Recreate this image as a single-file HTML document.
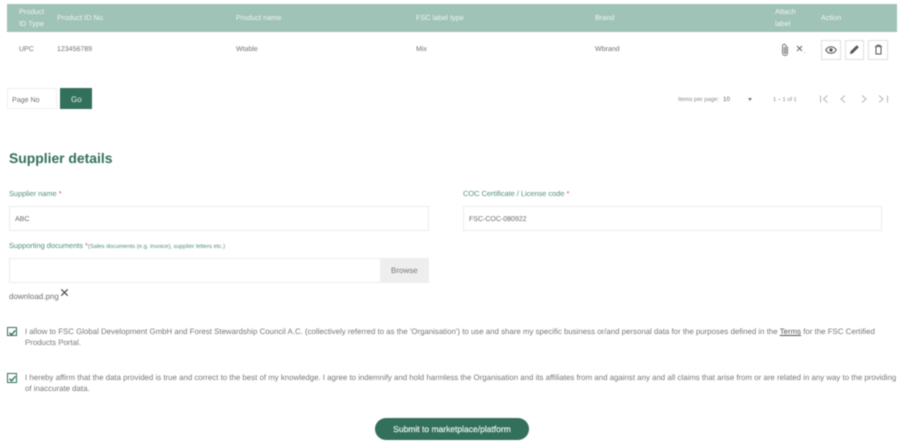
<!DOCTYPE html>
<html><head><meta charset="utf-8">
<style>
html,body{margin:0;padding:0;background:#fff;}
#p{position:relative;width:903px;height:442px;overflow:hidden;background:#fff;font-family:"Liberation Sans",sans-serif;filter:blur(.45px);text-rendering:geometricPrecision;}
#p div,#p span.a,#p svg{position:absolute;}
.t{white-space:nowrap;line-height:10px;}
.h{color:#eef5f2;font-size:7.3px;}
.c{color:#707070;font-size:7px;}
.l{color:#4f8f79;font-size:7.4px;}
.box{border:1px solid #ececec;box-sizing:border-box;background:#fff;}
.body{color:#777;font-size:7.86px;}
.s{color:#888;font-size:5.9px;}
</style></head><body>
<div id="p">
<div style="left:7px;top:4px;width:890px;height:28px;background:#9fc3b7"></div>
<div class="t h" style="left:19px;top:7px">Product</div>
<div class="t h" style="left:19px;top:19px">ID Type</div>
<div class="t h" style="left:57px;top:13px">Product ID No.</div>
<div class="t h" style="left:236px;top:13px">Product name</div>
<div class="t h" style="left:416px;top:13px">FSC label type</div>
<div class="t h" style="left:595px;top:13px">Brand</div>
<div class="t h" style="left:775px;top:7px">Attach</div>
<div class="t h" style="left:775px;top:19px">label</div>
<div class="t h" style="left:821px;top:13px">Action</div>

<div class="t c" style="left:19px;top:44.500px">UPC</div>
<div class="t c" style="left:57px;top:44.500px">123456789</div>
<div class="t c" style="left:236px;top:44.500px">Wtable</div>
<div class="t c" style="left:416px;top:44.500px">Mix</div>
<div class="t c" style="left:595px;top:44.500px">Wbrand</div>

<svg style="left:780px;top:43px" width="10" height="14" viewBox="0 0 10 14"><path d="M7.500 3.500V10a2.500 2.500 0 0 1-5 0V3a1.700 1.700 0 0 1 3.400 0v6.500a.8.8 0 0 1-1.600 0V4" fill="none" stroke="#777" stroke-width="1"/></svg>
<svg style="left:796px;top:45px" width="7" height="7" viewBox="0 0 7 7"><path d="M1 1l5 5M6 1L1 6" stroke="#666" stroke-width="1"/></svg>
<div style="left:804px;top:52px;width:1px;height:1px;background:#bbb"></div>

<div class="box" style="left:821px;top:40px;width:20px;height:20px;border-color:#e0e0e0"></div>
<div class="box" style="left:845px;top:40px;width:19px;height:20px;border-color:#e0e0e0"></div>
<div class="box" style="left:868px;top:40px;width:20px;height:20px;border-color:#e0e0e0"></div>
<svg style="left:825px;top:45px" width="12" height="10" viewBox="0 0 12 10"><path d="M.8 5C2 2.800 3.800 1.700 6 1.700S10 2.800 11.200 5C10 7.200 8.200 8.300 6 8.300S2 7.200 .8 5z" fill="none" stroke="#555" stroke-width="1"/><circle cx="6" cy="5" r="1.700" fill="#555"/></svg>
<svg style="left:849px;top:44px" width="11" height="11" viewBox="0 0 11 11"><path d="M1 10l.5-2.600L7.800 1.200 9.800 3.200 3.500 9.500z" fill="#555"/></svg>
<svg style="left:874px;top:44px" width="9" height="11" viewBox="0 0 9 11"><path d="M1 2.500h7M3 2.500V1.300h3v1.200M2 2.500V10h5V2.500" fill="none" stroke="#555" stroke-width="1"/></svg>

<div class="box" style="left:7px;top:88px;width:50px;height:21px;border-color:#f0f0f0"></div>
<div class="t" style="left:12px;top:94.500px;font-size:7.100px;color:#707070">Page No</div>
<div style="left:60px;top:88px;width:32px;height:21px;background:#33705c"></div>
<div class="t" style="left:71px;top:94.500px;font-size:8px;color:#e6f0ec">Go</div>

<div class="t s" style="left:678px;top:95px">Items per page:</div>
<div class="t" style="left:723px;top:95px;font-size:6.200px;color:#666">10</div>
<div style="left:748px;top:98px;width:0;height:0;border-left:2.500px solid transparent;border-right:2.500px solid transparent;border-top:3px solid #777"></div>
<div class="t s" style="left:773px;top:94.500px;font-size:5.700px">1 – 1 of 1</div>
<svg style="left:818px;top:94px" width="72" height="11" viewBox="0 0 72 11" fill="none" stroke="#b4b4b4" stroke-width="1"><path d="M2.500 1.500v7M9.500 1.500L5.500 5l4 3.500M27 1.500L23 5l4 3.500M44 1.500L48 5l-4 3.500M61 1.500L65 5l-4 3.500M69.500 1.500v7"/></svg>

<div class="t" style="left:9px;top:150px;font-size:13.900px;line-height:17px;font-weight:bold;color:#33705c">Supplier details</div>

<div class="t l" style="left:9px;top:188.500px">Supplier name <span style="color:#e65a5a">*</span></div>
<div class="box" style="left:9px;top:206px;width:420px;height:25px"></div>
<div class="t c" style="left:15px;top:214.500px;color:#666">ABC</div>

<div class="t l" style="left:463px;top:188.500px">COC Certificate / License code <span style="color:#e65a5a">*</span></div>
<div class="box" style="left:463px;top:206px;width:419px;height:25px"></div>
<div class="t c" style="left:469px;top:214.500px;color:#666">FSC-COC-080922</div>

<div class="t l" style="left:9px;top:240.500px">Supporting documents <span style="color:#e65a5a">*</span><span style="font-size:5.900px">(Sales documents (e.g. invoice), supplier letters etc.)</span></div>
<div class="box" style="left:9px;top:258px;width:420px;height:25px"></div>
<div style="left:380px;top:258px;width:49px;height:25px;background:#eeeeee"></div>
<div class="t" style="left:391px;top:266px;font-size:8px;color:#777">Browse</div>

<div class="t" style="left:9px;top:291.500px;font-size:8px;color:#707070">download.png</div>
<svg style="left:60px;top:288px" width="9" height="9" viewBox="0 0 9 9"><path d="M1.300 1.300l6.400 6.400M7.700 1.300L1.300 7.700" stroke="#444" stroke-width="1.100"/></svg>

<div style="left:7px;top:326.500px;border:1.500px solid #33705c;width:7.500px;height:7.500px"></div>
<svg style="left:8px;top:327.500px" width="9" height="9" viewBox="0 0 9 9"><path d="M1.500 4.800l2 2 4-4.500" fill="none" stroke="#33705c" stroke-width="1.400"/></svg>
<div class="t body" style="left:25px;top:326.500px">I allow to FSC Global Development GmbH and Forest Stewardship Council A.C. (collectively referred to as the 'Organisation') to use and share my specific business or/and personal data for the purposes defined in the <span style="text-decoration:underline;color:#555">Terms</span> for the FSC Certified</div>
<div class="t body" style="left:25px;top:337.500px">Products Portal.</div>

<div style="left:7px;top:373px;border:1.500px solid #33705c;width:7.500px;height:7.500px"></div>
<svg style="left:8px;top:374px" width="9" height="9" viewBox="0 0 9 9"><path d="M1.500 4.800l2 2 4-4.500" fill="none" stroke="#33705c" stroke-width="1.400"/></svg>
<div class="t body" style="left:25px;top:372.500px">I hereby affirm that the data provided is true and correct to the best of my knowledge. I agree to indemnify and hold harmless the Organisation and its affiliates from and against any and all claims that arise from or are related in any way to the providing</div>
<div class="t body" style="left:25px;top:383.500px">of inaccurate data.</div>

<div style="left:375px;top:418px;width:154px;height:22px;border-radius:11px;background:#33705c"></div>
<div class="t" style="left:375px;top:424px;width:154px;text-align:center;font-size:8.500px;color:#e6f0ec;-webkit-text-stroke:.2px #e6f0ec">Submit to marketplace/platform</div>
</div>
</body></html>
